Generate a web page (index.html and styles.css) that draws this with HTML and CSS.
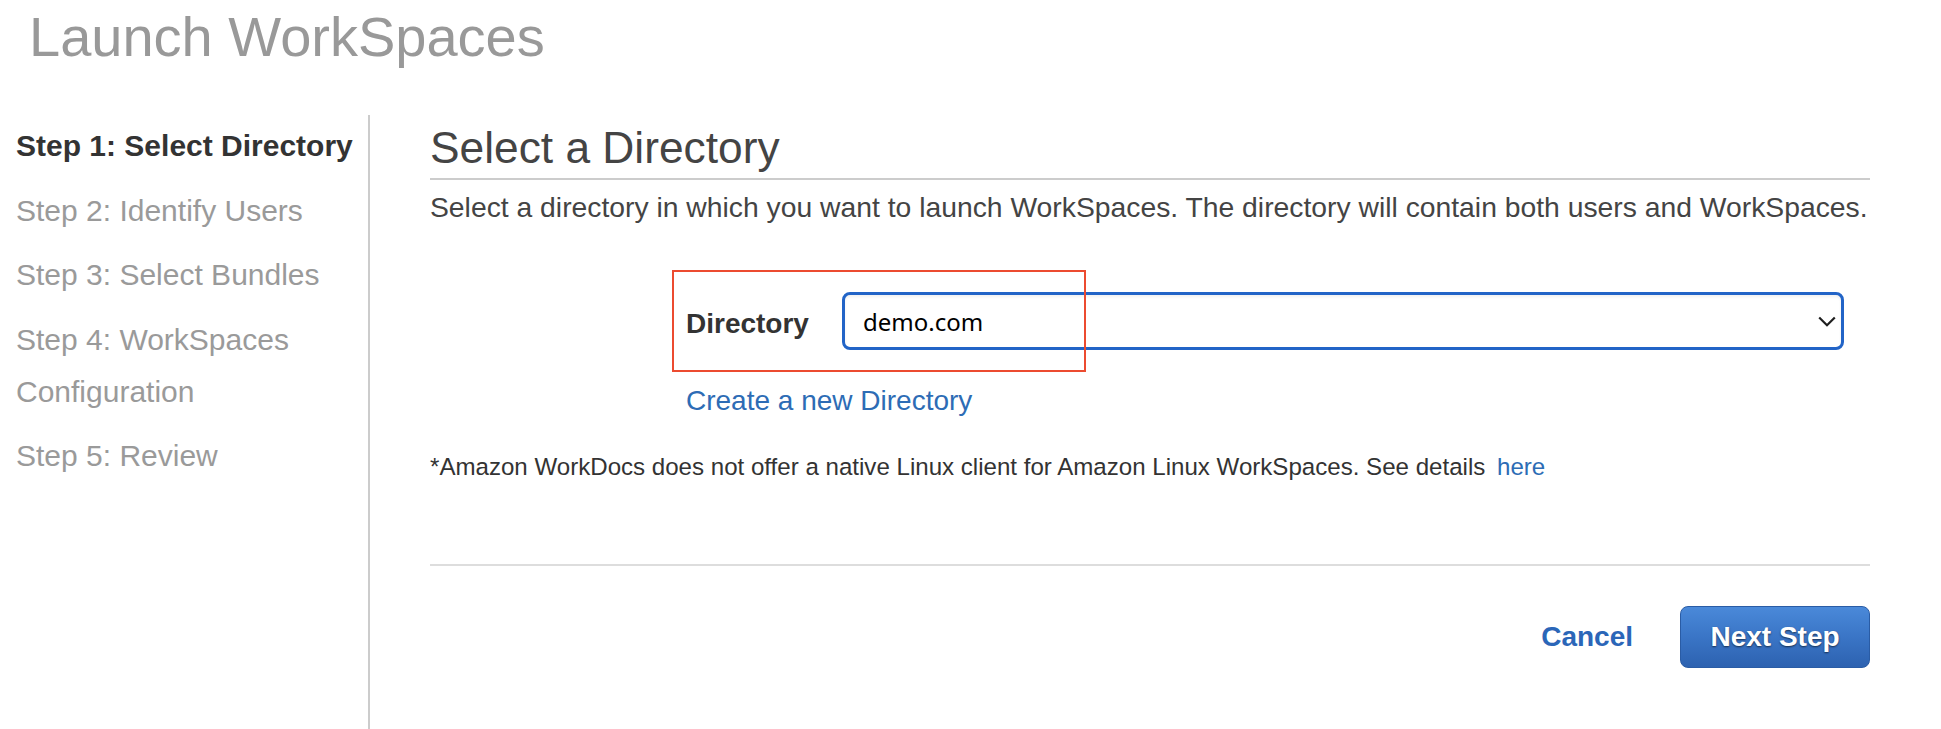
FILE: index.html
```
<!DOCTYPE html>
<html lang="en">
<head>
<meta charset="utf-8">
<title>Launch WorkSpaces</title>
<link rel="stylesheet" href="styles.css">
</head>
<body>
  <h1 class="page-title">Launch WorkSpaces</h1>
  <div class="wizard">
    <nav class="steps">
      <div class="step active">Step 1: Select Directory</div>
      <div class="step">Step 2: Identify Users</div>
      <div class="step">Step 3: Select Bundles</div>
      <div class="step">Step 4: WorkSpaces Configuration</div>
      <div class="step">Step 5: Review</div>
    </nav>
    <main class="content">
      <h2 class="section-title">Select a Directory</h2>
      <p class="intro">Select a directory in which you want to launch WorkSpaces. The directory will contain both users and WorkSpaces.</p>
      <div class="form-row">
        <span class="highlight"></span>
        <label class="field-label">Directory</label>
        <div class="select">
          <span class="select-value">demo.com</span>
          <svg class="chevron" width="18" height="11" viewBox="0 0 18 11"><path d="M1.2 1.5 L9 9.2 L16.8 1.5" fill="none" stroke="#1f1f1f" stroke-width="2.2"/></svg>
        </div>
      </div>
      <a class="create-link" href="#">Create a new Directory</a>
      <p class="note">*Amazon WorkDocs does not offer a native Linux client for Amazon Linux WorkSpaces. See details <a class="note-link" href="#">here</a></p>
      <div class="divider"></div>
      <div class="actions">
        <a class="cancel" href="#">Cancel</a>
        <button class="next-btn">Next Step</button>
      </div>
    </main>
  </div>
</body>
</html>
```
FILE: styles.css
```
html, body {
  margin: 0;
  padding: 0;
  background: #ffffff;
}

body {
  font-family: "Liberation Sans", Arial, Helvetica, sans-serif;
  height: 100vh;
  display: flex;
  flex-direction: column;
  overflow: hidden;
}

.page-title {
  margin: 0;
  padding: 5px 0 0 29px;
  font-size: 56px;
  line-height: 64px;
  font-weight: normal;
  color: #999999;
}

.wizard {
  flex: 1;
  display: flex;
  margin-top: 46px;
}

.steps {
  width: 370px;
  flex: none;
  box-sizing: border-box;
  padding: 5px 12px 0 16px;
  border-right: 2px solid #cccccc;
}

.step {
  font-size: 30px;
  line-height: 52px;
  color: #9a9a9a;
  margin-bottom: 12.5px;
}

.step.active {
  color: #333333;
  font-weight: bold;
}

.content {
  flex: 1;
  padding: 0 71px 0 60px;
}

.section-title {
  margin: 9px 0 0;
  padding-bottom: 6px;
  border-bottom: 2px solid #cccccc;
  font-size: 44.3px;
  line-height: 48px;
  font-weight: normal;
  color: #444444;
}

.intro {
  margin: 7px 0 0;
  font-size: 28.3px;
  line-height: 40px;
  color: #444444;
  white-space: nowrap;
}

.form-row {
  position: relative;
  display: flex;
  align-items: center;
  margin: 65px 26px 0 256px;
}

.highlight {
  position: absolute;
  left: -14px;
  top: -22px;
  width: 414px;
  height: 102px;
  box-sizing: border-box;
  border: 2px solid #ec4b30;
  pointer-events: none;
  z-index: 2;
}

.field-label {
  width: 156px;
  flex: none;
  padding-top: 6px;
  font-size: 28px;
  font-weight: bold;
  color: #333333;
}

.select {
  flex: 1;
  height: 58px;
  box-sizing: border-box;
  border: 3.5px solid #2264c7;
  border-radius: 8px;
  padding: 0 5px 0 18px;
  display: flex;
  align-items: center;
  justify-content: space-between;
  box-shadow: inset 0 2px 3px rgba(0, 0, 0, 0.06);
}

.select-value {
  font-family: "Noto Sans", "Open Sans", sans-serif;
  font-size: 24px;
  color: #000000;
}

.chevron {
  display: block;
  margin-top: 1px;
}

.create-link {
  display: block;
  width: max-content;
  margin: 31px 0 0 256px;
  font-size: 28px;
  line-height: 40px;
  color: #2d6cb5;
  text-decoration: none;
}

.note {
  margin: 28px 0 0;
  font-size: 24.1px;
  line-height: 36px;
  color: #333333;
  white-space: nowrap;
}

.note-link {
  margin-left: 5px;
  color: #2d6cb5;
  text-decoration: none;
}

.divider {
  margin-top: 79px;
  height: 2px;
  background: #dddddd;
}

.actions {
  margin-top: 40px;
  display: flex;
  justify-content: flex-end;
  align-items: center;
  gap: 47px;
}

.cancel {
  font-size: 28px;
  font-weight: bold;
  color: #2b66b8;
  text-decoration: none;
}

.next-btn {
  width: 190px;
  height: 62px;
  border: 1px solid #2a5ca5;
  border-radius: 8px;
  background: linear-gradient(to bottom, #4a89d9 0%, #3a75c6 50%, #2d62b0 100%);
  color: #ffffff;
  font-family: "Liberation Sans", Arial, sans-serif;
  font-size: 28px;
  font-weight: bold;
  text-shadow: 0 1px 2px rgba(0, 0, 0, 0.6);
  padding: 0;
  cursor: pointer;
}
```
